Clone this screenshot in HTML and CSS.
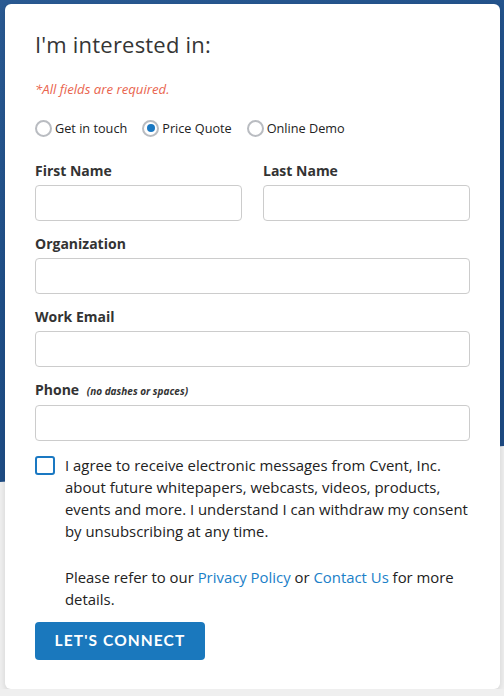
FILE: index.html
```html
<!DOCTYPE html>
<html lang="en">
<head>
<meta charset="utf-8">
<title>Cvent form</title>
<link rel="stylesheet" href="styles.css">
</head>
<body>
<div class="backdrop"></div>
<form class="card">
  <h1 class="title">I'm interested in:</h1>
  <p class="required">*All fields are required.</p>
  <div class="radios">
    <label class="radio"><span class="dot"></span>Get in touch</label>
    <label class="radio"><span class="dot on"></span>Price Quote</label>
    <label class="radio"><span class="dot"></span>Online Demo</label>
  </div>
  <div class="row two">
    <div class="field">
      <label class="lbl">First Name</label>
      <div class="input"></div>
    </div>
    <div class="field">
      <label class="lbl">Last Name</label>
      <div class="input"></div>
    </div>
  </div>
  <div class="row">
    <div class="field">
      <label class="lbl">Organization</label>
      <div class="input"></div>
    </div>
  </div>
  <div class="row">
    <div class="field">
      <label class="lbl">Work Email</label>
      <div class="input"></div>
    </div>
  </div>
  <div class="row">
    <div class="field">
      <label class="lbl">Phone <span class="hint">(no dashes or spaces)</span></label>
      <div class="input"></div>
    </div>
  </div>
  <div class="consent">
    <span class="check"></span>
    <div class="consent-text">
      <p>I agree to receive electronic messages from Cvent, Inc. about future whitepapers, webcasts, videos, products, events and more. I understand I can withdraw my consent by unsubscribing at any time.</p>
      <p class="second">Please refer to our <a href="#">Privacy Policy</a> or <a href="#">Contact Us</a> for more details.</p>
    </div>
  </div>
  <button type="button" class="btn">LET'S CONNECT</button>
</form>
</body>
</html>
```
FILE: styles.css
```css
html {
  background: #efefef;
}
body {
  margin: 0;
  position: relative;
  font-family: "Open Sans", "Liberation Sans", sans-serif;
  color: #222;
}
.backdrop {
  position: absolute;
  top: 0;
  left: 0;
  width: 100%;
  height: 482px;
  background: linear-gradient(160deg, #2a5a93 0%, #1f4f88 45%, #1d4a82 100%);
  clip-path: polygon(0 0, 100% 0, 100% 446px, 0 482px);
  z-index: 0;
}
.card {
  position: relative;
  z-index: 1;
  box-sizing: border-box;
  width: 495px;
  margin: 4px 0 0 5px;
  padding: 25px 30px 29px 30px;
  background: #fff;
  border-radius: 6px;
  box-shadow: 0 2px 6px rgba(0, 0, 0, 0.12);
}
.title {
  margin: 0;
  font-size: 22px;
  line-height: 30px;
  font-weight: 400;
  color: #353535;
  letter-spacing: 0.2px;
}
.required {
  margin: 21px 0 0;
  font-size: 13.2px;
  line-height: 18px;
  font-style: italic;
  color: #e9644e;
}
.radios {
  display: flex;
  margin-top: 21px;
  gap: 15px;
}
.radio {
  display: flex;
  align-items: center;
  gap: 3px;
  font-size: 12.7px;
  line-height: 18px;
  color: #222;
}
.dot {
  box-sizing: border-box;
  width: 17px;
  height: 17px;
  border: 2px solid #b9bcc1;
  border-radius: 50%;
  background: #fff;
  position: relative;
}
.dot.on::after {
  content: "";
  position: absolute;
  left: 2.5px;
  top: 2.5px;
  width: 8px;
  height: 8px;
  border-radius: 50%;
  background: #1a78c2;
}
.row {
  margin-top: 13px;
}
.radios + .row {
  margin-top: 24px;
}
.row.two {
  display: grid;
  grid-template-columns: 1fr 1fr;
  gap: 21px;
}
.lbl {
  display: block;
  font-size: 14px;
  line-height: 20px;
  font-weight: 700;
  color: #333;
  margin-bottom: 4px;
}
.hint {
  font-size: 10px;
  font-style: italic;
  font-weight: 700;
  margin-left: 4px;
  color: #333;
}
.input {
  box-sizing: border-box;
  height: 36px;
  border: 1px solid #cccccc;
  border-radius: 4px;
  background: #fff;
}
.consent {
  display: flex;
  gap: 10px;
  margin-top: 13px;
}
.check {
  flex: none;
  box-sizing: border-box;
  width: 20px;
  height: 19px;
  margin-top: 2px;
  border: 2px solid #1a78c2;
  border-radius: 3px;
}
.consent-text p {
  margin: 0;
  font-size: 14.9px;
  line-height: 22px;
  color: #222;
}
.consent-text p.second {
  margin-top: 24px;
}
.consent-text a {
  color: #1a80c8;
  text-decoration: none;
}
.btn {
  display: block;
  margin-top: 12px;
  width: 170px;
  height: 38px;
  border: none;
  border-radius: 4px;
  background: #1a78bd;
  color: #fff;
  font-family: Lato, "Open Sans", sans-serif;
  font-weight: 700;
  font-size: 15.5px;
  letter-spacing: 1.1px;
  padding: 0 0 3px;
}
```
